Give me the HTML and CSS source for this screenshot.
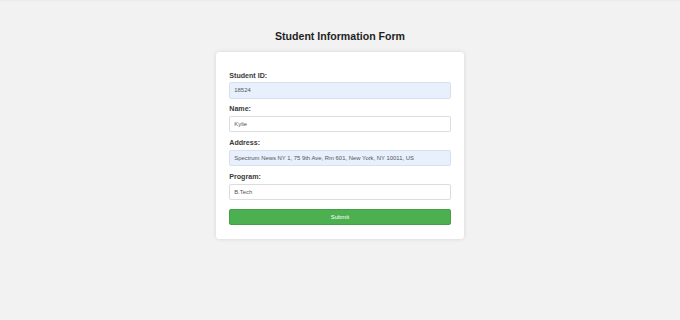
FILE: index.html
```html
<!DOCTYPE html>
<html lang="en">
<head>
<meta charset="utf-8">
<title>Student Information Form</title>
<link rel="stylesheet" href="styles.css">
</head>
<body>
  <h2 class="title">Student Information Form</h2>
  <form class="card">
    <label class="field-label" for="sid">Student ID:</label>
    <input class="field autofill" id="sid" type="text" value="18524">
    <label class="field-label" for="name">Name:</label>
    <input class="field" id="name" type="text" value="Kylie">
    <label class="field-label" for="addr">Address:</label>
    <input class="field autofill" id="addr" type="text" value="Spectrum News NY 1, 75 9th Ave, Rm 601, New York, NY 10011, US">
    <label class="field-label" for="prog">Program:</label>
    <input class="field" id="prog" type="text" value="B.Tech">
    <button class="submit" type="button">Submit</button>
  </form>
</body>
</html>
```
FILE: styles.css
```css
html, body {
  margin: 0;
  padding: 0;
}
body {
  background: linear-gradient(#e9e9e9, #f2f2f2 2px) #f2f2f2;
  font-family: "Liberation Sans", Arial, sans-serif;
  min-height: 320px;
  padding-top: 29.6px;
  box-sizing: border-box;
}
.title {
  margin: 0 0 9.4px;
  text-align: center;
  font-size: 10.6px;
  line-height: 13px;
  font-weight: bold;
  color: #1f1f1f;
}
.card {
  width: 248px;
  margin: 0 auto;
  box-sizing: border-box;
  background: #fff;
  border-radius: 3.5px;
  box-shadow: 0 0 4.4px rgba(0, 0, 0, 0.12);
  padding: 19.7px 13.3px 14px;
  display: flex;
  flex-direction: column;
}
.field-label {
  display: block;
  font-size: 7.1px;
  line-height: 8.5px;
  font-weight: bold;
  color: #3a3a3a;
  margin-bottom: 2.1px;
}
.field {
  display: block;
  box-sizing: border-box;
  width: 100%;
  height: 16.4px;
  margin: 0 0 6.8px;
  padding: 0 4px;
  border: 1px solid #ddd;
  border-radius: 1.8px;
  background: #fff;
  font-family: "Liberation Sans", Arial, sans-serif;
  font-size: 5.9px;
  color: #555;
  outline: none;
}
.field.autofill {
  background: #e8f0fe;
  border-color: #d8e0ec;
}
.submit {
  display: block;
  width: 100%;
  height: 16px;
  margin-top: 2.6px;
  border: 1px solid #43a047;
  border-radius: 1.8px;
  background: #4caf50;
  color: #fff;
  font-family: "Liberation Sans", Arial, sans-serif;
  font-size: 5.9px;
  font-weight: normal;
  padding: 0;
}
```
